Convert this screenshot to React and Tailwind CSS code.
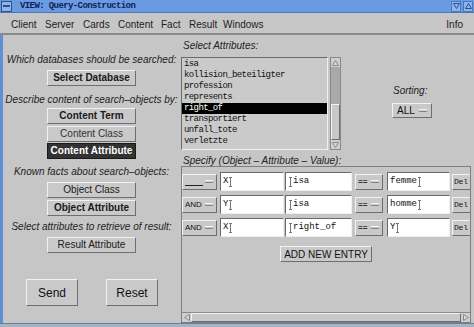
import React from "react";

const SANS = "font-['Liberation_Sans',Arial,sans-serif]";
const MONO = "font-['Liberation_Mono','Courier_New',monospace]";
const RAISED =
  "border border-t-[#f2f2f2] border-l-[#f2f2f2] border-r-[#6e6e6e] border-b-[#6e6e6e]";
const SUNKEN =
  "border border-t-[#6a6a6a] border-l-[#6a6a6a] border-r-[#f0f0f0] border-b-[#f0f0f0]";

function Label({ children, className = "" }) {
  return (
    <div
      className={`h-[12px] leading-[12px] text-[10px] italic text-[#222] whitespace-nowrap ${className}`}
    >
      {children}
    </div>
  );
}

function Btn({ children, className = "", dark = false, bold = false }) {
  return (
    <div
      className={`w-[89px] h-[16px] flex items-center justify-center text-[10px] leading-none whitespace-nowrap ${
        dark
          ? "bg-[#333333] text-white border border-[#1a1a1a]"
          : `bg-[#c9c9c9] text-[#1a1a1a] ${RAISED}`
      } ${bold ? "font-bold" : ""} ${className}`}
    >
      {children}
    </div>
  );
}

function Caret() {
  return (
    <span className="inline-flex flex-col items-center w-[3px] h-[10px] mx-[1px]">
      <span className="w-[3px] h-px bg-[#777]" />
      <span className="w-px flex-1 bg-[#777]" />
      <span className="w-[3px] h-px bg-[#777]" />
    </span>
  );
}

function Field({ children, className = "" }) {
  return (
    <div
      className={`h-[19px] bg-white ${SUNKEN} flex items-center pl-[2px] ${MONO} text-[9px] text-[#111] shrink-0 ${className}`}
    >
      {children}
    </div>
  );
}

function Indicator() {
  return (
    <span className="w-[8px] h-[3px] border-t border-t-[#f4f4f4] border-b border-b-[#888] shrink-0" />
  );
}

function Opt({ children, className = "" }) {
  return (
    <div
      className={`h-[16px] flex items-center justify-between pl-[2px] pr-[3px] bg-[#c9c9c9] ${RAISED} shrink-0 ${className}`}
    >
      {children}
      <Indicator />
    </div>
  );
}

function TriUp() {
  return (
    <svg width="7" height="6" viewBox="0 0 7 6">
      <polygon points="3.5,0.5 6.5,5.5 0.5,5.5" fill="#d8d8d8" stroke="#8a8a8a" strokeWidth="1" />
    </svg>
  );
}
function TriDown() {
  return (
    <svg width="7" height="6" viewBox="0 0 7 6">
      <polygon points="0.5,0.5 6.5,0.5 3.5,5.5" fill="#d8d8d8" stroke="#8a8a8a" strokeWidth="1" />
    </svg>
  );
}
function TriLeft() {
  return (
    <svg width="6" height="7" viewBox="0 0 6 7">
      <polygon points="0.5,3.5 5.5,0.5 5.5,6.5" fill="#d8d8d8" stroke="#8a8a8a" strokeWidth="1" />
    </svg>
  );
}
function TriRight() {
  return (
    <svg width="6" height="7" viewBox="0 0 6 7">
      <polygon points="5.5,3.5 0.5,0.5 0.5,6.5" fill="#d8d8d8" stroke="#8a8a8a" strokeWidth="1" />
    </svg>
  );
}

const items = [
  "isa",
  "kollision_beteiligter",
  "profession",
  "represents",
  "right_of",
  "transportiert",
  "unfall_tote",
  "verletzte",
];

const menu = [
  ["Client", "w-[34px]"],
  ["Server", "w-[38px]"],
  ["Cards", "w-[35px]"],
  ["Content", "w-[43px]"],
  ["Fact", "w-[28px]"],
  ["Result", "w-[34px]"],
  ["Windows", "w-[60px]"],
];

function Row({ op, obj, objCaretEnd = true, attr, val }) {
  return (
    <div className="flex items-center h-[19px]">
      <Opt className="w-[35px]">
        {op === "" ? (
          <span className="w-[18px] h-[8px] border-b border-[#222]" />
        ) : (
          <span className="text-[8px] leading-none text-[#111]">{op}</span>
        )}
      </Opt>
      <Field className="w-[64px] ml-[3px]">
        {obj}
        {objCaretEnd && <Caret />}
      </Field>
      <Field className="w-[67px] ml-[1px]">
        <Caret />
        {attr}
      </Field>
      <Opt className="w-[28px] ml-[3px]">
        <span className={`${MONO} text-[8px] leading-none font-bold text-[#333]`}>==</span>
      </Opt>
      <Field className="w-[63px] ml-[4px]">
        {val}
        <Caret />
      </Field>
      <div
        className={`w-[22px] h-[16px] ml-[2px] shrink-0 flex items-center pl-[1px] bg-[#c9c9c9] ${RAISED} ${MONO} text-[8px] tracking-[-0.2px] text-[#111]`}
      >
        Del
      </div>
    </div>
  );
}

export default function App() {
  return (
    <div
      className={`w-[474px] h-[327px] overflow-hidden flex flex-col bg-[#c6c6c6] ${SANS}`}
    >
      {/* Title bar */}
      <div className="h-[13px] shrink-0 bg-[#6a9ae0] flex items-center border-b border-[#4a78c0]">
        <div className="w-[11px] h-[11px] ml-[1px] bg-[#8fb4ec] border border-[#2d4f8f] flex items-center justify-center">
          <span className="w-[7px] h-[2px] bg-[#2d4f8f]" />
        </div>
        <div
          className={`ml-[8px] ${MONO} font-bold text-[9px] tracking-[-0.6px] leading-none text-[#0e1e5c]`}
        >
          VIEW: Query-Construction
        </div>
        <div className="ml-auto flex items-center gap-[2px] mr-[1px]">
          <div className="w-[10px] h-[11px] bg-[#8fb4ec] border border-[#4a78c0] flex items-center justify-center">
            <svg width="7" height="6" viewBox="0 0 7 6">
              <polygon points="0.5,0.5 6.5,0.5 3.5,5.5" fill="none" stroke="#2d4f8f" strokeWidth="1" />
            </svg>
          </div>
          <div className="w-[10px] h-[11px] bg-[#8fb4ec] border border-[#4a78c0] flex items-center justify-center">
            <svg width="7" height="6" viewBox="0 0 7 6">
              <polygon points="3.5,0.5 6.5,5.5 0.5,5.5" fill="none" stroke="#2d4f8f" strokeWidth="1" />
            </svg>
          </div>
        </div>
      </div>

      {/* Menu bar */}
      <div className="h-[22px] shrink-0 bg-[#c6c6c6] border-b-2 border-[#8a8a8a] flex items-center pt-[2px] pl-[11px] pr-[11px] text-[10px] text-[#222]">
        {menu.map(([m, w]) => (
          <div key={m} className={`${w} whitespace-nowrap`}>
            {m}
          </div>
        ))}
        <div className="ml-auto">Info</div>
      </div>

      {/* Body */}
      <div className="flex flex-1 min-h-0">
        <div className="w-[3px] bg-[#5f8fd5] shrink-0" />

        {/* Left panel */}
        <div className="w-[177px] shrink-0 flex flex-col items-center">
          <Label className="mt-[19px]">Which databases should be searched:</Label>
          <Btn bold className="mt-[4px]">Select Database</Btn>
          <Label className="mt-[8px]">Describe content of search–objects by:</Label>
          <Btn bold className="mt-[2px]">Content Term</Btn>
          <Btn className="mt-[2px] text-[#333]">Content Class</Btn>
          <Btn dark bold className="mt-[1px]">Content Attribute</Btn>
          <Label className="mt-[7px]">Known facts about search–objects:</Label>
          <Btn className="mt-[4px]">Object Class</Btn>
          <Btn bold className="mt-[2px]">Object Attribute</Btn>
          <Label className="mt-[5px]">Select attributes to retrieve of result:</Label>
          <Btn className="mt-[4px]">Result Attribute</Btn>
          <div className="mt-[26px] w-full flex pl-[23px] gap-[28px]">
            {["Send", "Reset"].map((t) => (
              <div
                key={t}
                className={`w-[52px] h-[27px] flex items-center justify-center text-[12px] text-[#111] bg-[#c9c9c9] ${RAISED}`}
              >
                {t}
              </div>
            ))}
          </div>
        </div>

        {/* Right panel */}
        <div className="flex-1 flex flex-col pl-[1px]">
          <Label className="mt-[5px] ml-[2px]">Select Attributes:</Label>
          <div className="flex items-start mt-[5px]">
            <div className={`w-[147px] h-[93px] bg-[#cacaca] ${SUNKEN} pt-[1px]`}>
              {items.map((it, i) => (
                <div
                  key={it}
                  className={`h-[11px] leading-[11px] pl-[2px] ${MONO} text-[9px] tracking-[-0.6px] ${
                    i === 4 ? "bg-black text-white" : "text-[#111]"
                  }`}
                >
                  {it}
                </div>
              ))}
            </div>
            <div className="w-[11px] h-[93px] ml-[2px] border border-[#8a8a8a] flex flex-col bg-[#c6c6c6]">
              <div className="h-[9px] flex items-center justify-center bg-[#cfcfcf]">
                <TriUp />
              </div>
              <div className="h-[37px] bg-[#a9a9a9]" />
              <div className={`flex-1 bg-[#c8c8c8] ${RAISED}`} />
              <div className="h-[9px] flex items-center justify-center bg-[#cfcfcf]">
                <TriDown />
              </div>
            </div>
            <div className="ml-[51px] mt-[28px] flex flex-col items-start">
              <Label className="ml-[1px]">Sorting:</Label>
              <div
                className={`mt-[6px] w-[40px] h-[15px] flex items-center justify-between pl-[4px] pr-[4px] bg-[#c9c9c9] ${RAISED} text-[10px] text-[#111]`}
              >
                <span className="leading-none">ALL</span>
                <Indicator />
              </div>
            </div>
          </div>
          <div className="h-[11px] leading-[11px] mt-[5px] ml-[2px] text-[10px] italic text-[#222] whitespace-nowrap">
            Specify (Object – Attribute – Value):
          </div>

          {/* Scrolled frame */}
          <div className="w-[290px] flex-1 border border-[#7e7e7e] flex flex-col overflow-hidden">
            <div className="flex flex-col gap-[4px] pt-[5px] overflow-hidden">
              <Row op="" obj="X" attr="isa" val="femme" />
              <Row op="AND" obj="Y" attr="isa" val="homme" />
              <Row op="AND" obj="X" attr="right_of" val="Y" />
            </div>
            <div className="flex justify-center mt-[9px]">
              <div
                className={`w-[92px] h-[16px] flex items-center justify-center bg-[#c9c9c9] ${RAISED} text-[10px] text-[#111] whitespace-nowrap`}
              >
                ADD NEW ENTRY
              </div>
            </div>
            <div className="mt-auto h-[10px] flex border-t border-[#8a8a8a] bg-[#c6c6c6]">
              <div className="w-[9px] flex items-center justify-center bg-[#cfcfcf]">
                <TriLeft />
              </div>
              <div className={`flex-1 bg-[#c9c9c9] ${RAISED}`} />
              <div className="w-[9px] flex items-center justify-center bg-[#cfcfcf]">
                <TriRight />
              </div>
            </div>
          </div>
        </div>
      </div>

      {/* Bottom window border */}
      <div className="h-[4px] shrink-0 bg-[#a3b4c9] border-t border-[#6e7e92]" />
    </div>
  );
}
